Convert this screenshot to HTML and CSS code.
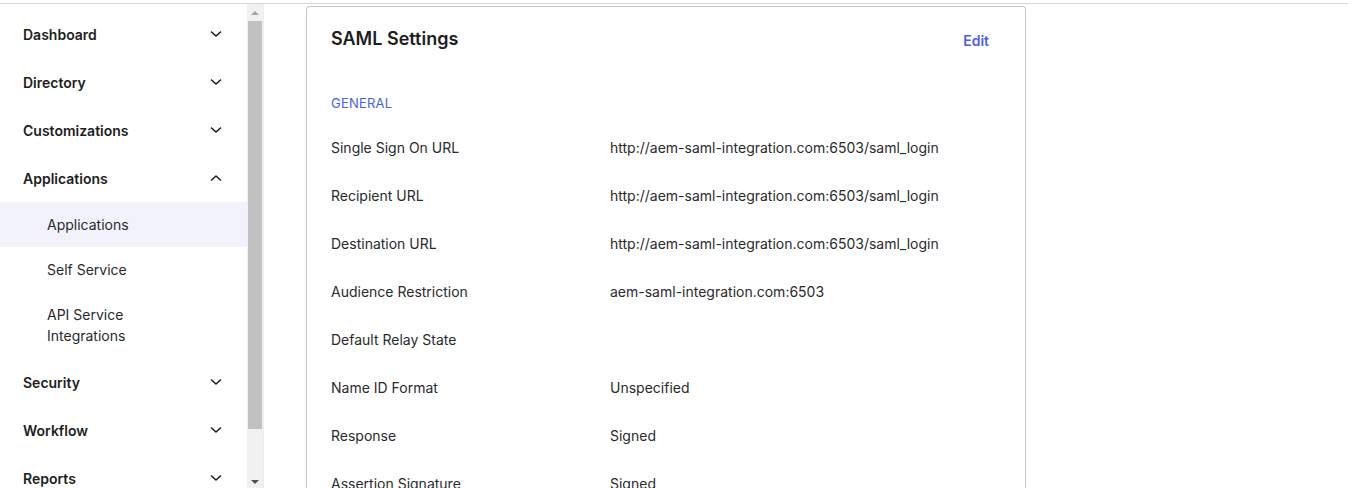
FILE: index.html
```html
<!DOCTYPE html>
<html lang="en">
<head>
<meta charset="utf-8">
<title>SAML Settings</title>
<link rel="stylesheet" href="styles.css">
</head>
<body>
<div class="topbar"></div>
<div class="layout">
  <div class="side-wrap">
    <nav class="sidebar">
      <div class="nav-item"><span>Dashboard</span><svg class="chev" viewBox="0 0 12 12"><path d="M1.5 4 L6 8 L10.5 4"/></svg></div>
      <div class="nav-item"><span>Directory</span><svg class="chev" viewBox="0 0 12 12"><path d="M1.5 4 L6 8 L10.5 4"/></svg></div>
      <div class="nav-item"><span>Customizations</span><svg class="chev" viewBox="0 0 12 12"><path d="M1.5 4 L6 8 L10.5 4"/></svg></div>
      <div class="nav-item"><span>Applications</span><svg class="chev" viewBox="0 0 12 12"><path d="M1.5 8 L6 4 L10.5 8"/></svg></div>
      <div class="sub-item active">Applications</div>
      <div class="sub-item">Self Service</div>
      <div class="sub-item">API Service<br>Integrations</div>
      <div class="nav-item"><span>Security</span><svg class="chev" viewBox="0 0 12 12"><path d="M1.5 4 L6 8 L10.5 4"/></svg></div>
      <div class="nav-item"><span>Workflow</span><svg class="chev" viewBox="0 0 12 12"><path d="M1.5 4 L6 8 L10.5 4"/></svg></div>
      <div class="nav-item"><span>Reports</span><svg class="chev" viewBox="0 0 12 12"><path d="M1.5 4 L6 8 L10.5 4"/></svg></div>
    </nav>
    <div class="scrollbar" aria-hidden="true">
      <div class="sb-btn"><span class="arrow-up"></span></div>
      <div class="sb-track"><div class="sb-thumb"></div></div>
      <div class="sb-btn"><span class="arrow-down"></span></div>
    </div>
  </div>
  <main class="content">
    <section class="card">
      <header class="card-head">
        <h2 class="card-title">SAML Settings</h2>
        <a class="edit" href="#">Edit</a>
      </header>
      <div class="section-title">GENERAL</div>
      <dl class="rows">
        <dt>Single Sign On URL</dt><dd>http://aem-saml-integration.com:6503/saml_login</dd>
        <dt>Recipient URL</dt><dd>http://aem-saml-integration.com:6503/saml_login</dd>
        <dt>Destination URL</dt><dd>http://aem-saml-integration.com:6503/saml_login</dd>
        <dt>Audience Restriction</dt><dd>aem-saml-integration.com:6503</dd>
        <dt>Default Relay State</dt><dd></dd>
        <dt>Name ID Format</dt><dd>Unspecified</dd>
        <dt>Response</dt><dd>Signed</dd>
        <dt>Assertion Signature</dt><dd>Signed</dd>
      </dl>
    </section>
  </main>
</div>
</body>
</html>
```
FILE: styles.css
```css
* { box-sizing: border-box; }
html, body { margin: 0; padding: 0; height: 100%; overflow: hidden; background: #fff; }
body { font-family: Inter, "Noto Sans", sans-serif; color: #1d1d21; }

.topbar { height: 4px; border-bottom: 1px solid #d7d7dc; }

.layout { display: flex; height: 484px; }

.side-wrap {
  display: flex;
  flex: none;
  height: 484px;
  border-right: 1px solid #ececef;
}
.sidebar {
  width: 247px;
  height: 484px;
  overflow: hidden;
  padding-top: 6px;
}

.nav-item {
  height: 48px;
  display: flex;
  align-items: center;
  justify-content: space-between;
  padding: 0 25px 0 23px;
  font-size: 14px;
  font-weight: 600;
  color: #1d1d21;
}
.chev { width: 12px; height: 12px; fill: none; stroke: #1d1d21; stroke-width: 1.6; stroke-linecap: round; stroke-linejoin: round; }

.sub-item {
  padding: 12px 20px 12px 47px;
  font-size: 14px;
  line-height: 21px;
  color: #2a2a2e;
}
.sub-item.active { background: #f1f2fc; }

.scrollbar {
  width: 16px;
  height: 484px;
  background: #f1f1f1;
  display: flex;
  flex-direction: column;
}
.sb-btn { height: 17px; flex: none; display: flex; align-items: center; justify-content: center; }
.sb-track { flex: 1; padding: 0 1px; }
.sb-thumb { height: 408px; background: #c1c1c1; }
.arrow-up, .arrow-down { width: 0; height: 0; border-left: 4px solid transparent; border-right: 4px solid transparent; }
.arrow-up { border-bottom: 4px solid #a3a3a3; }
.arrow-down { border-top: 4px solid #505050; margin-top: 4px; }

.content { flex: 1; padding: 2px 0 0 42px; }

.card {
  width: 720px;
  height: 600px;
  border: 1px solid #c6c6cc;
  border-bottom: none;
  border-radius: 4px 4px 0 0;
  padding: 20px 36px 0 24px;
}
.card-head { display: flex; justify-content: space-between; align-items: baseline; }
.card-title { margin: 0; font-size: 18px; line-height: 24px; font-weight: 600; color: #1d1d21; }
.edit { font-size: 14px; font-weight: 600; color: #4d5fe0; text-decoration: none; position: relative; top: 1px; }

.section-title {
  margin-top: 42px;
  font-size: 13px;
  line-height: 20px;
  color: #4a63e0;
  letter-spacing: 0.2px;
}
.rows {
  margin: 11px 0 0;
  display: grid;
  grid-template-columns: 279px 1fr;
  grid-auto-rows: 48px;
  align-items: center;
  font-size: 14px;
  color: #2a2a2e;
}
.rows dt, .rows dd { margin: 0; line-height: 20px; }
```
